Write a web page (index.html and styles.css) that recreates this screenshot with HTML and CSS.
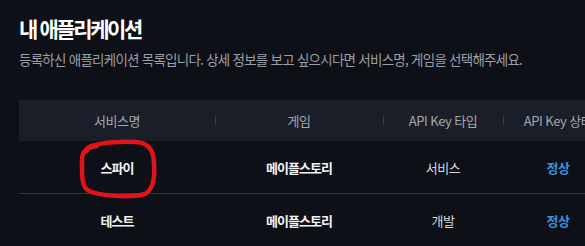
FILE: index.html
```html
<!DOCTYPE html>
<html lang="ko">
<head>
  <meta charset="UTF-8" />
  <title>내 애플리케이션</title>
  <link rel="stylesheet" href="styles.css">
</head>
<body>
  <div class="page">
    <h1 class="title">내 애플리케이션</h1>
    <p class="desc">등록하신 애플리케이션 목록입니다. 상세 정보를 보고 싶으시다면 서비스명, 게임을 선택해주세요.</p>

    <table class="apps">
      <colgroup>
        <col class="c-name">
        <col class="c-game">
        <col class="c-type">
        <col class="c-state">
        <col class="c-more">
      </colgroup>
      <thead>
        <tr>
          <th>서비스명</th>
          <th>게임</th>
          <th>API Key 타입</th>
          <th>API Key 상태</th>
          <th>등록일</th>
        </tr>
      </thead>
      <tbody>
        <tr>
          <td class="name marked">
            스파이
            <svg class="scribble" viewBox="78 138 82 64" width="82" height="64">
              <path d="M87 151 C83 145 110 141 136 142 C150 143 154 152 154 164 C155 177 154 189 145 194 C130 198 100 196 89 191 C81 187 82 174 82 160 C82 152 86 147 97 146" />
            </svg>
          </td>
          <td class="game">메이플스토리</td>
          <td>서비스</td>
          <td class="state">정상</td>
          <td></td>
        </tr>
        <tr>
          <td class="name">테스트</td>
          <td class="game">메이플스토리</td>
          <td>개발</td>
          <td class="state">정상</td>
          <td></td>
        </tr>
      </tbody>
    </table>
  </div>
</body>
</html>
```

FILE: styles.css
```css
html, body {
  margin: 0;
  padding: 0;
  background: #0d1017;
  color: #fff;
  font-family: "Noto Sans CJK KR", "Noto Sans", sans-serif;
  height: 100vh;
  overflow: hidden;
}

.page {
  padding: 12px 0 0 19px;
}

.title {
  margin: 0;
  font-size: 21px;
  font-weight: 700;
  line-height: 32px;
  letter-spacing: -2.4px;
}

.desc {
  margin: 5px 0 0;
  font-size: 13.5px;
  line-height: 20px;
  letter-spacing: -0.75px;
  color: #9a9fa8;
}

.apps {
  margin-top: 31px;
  border-collapse: collapse;
  table-layout: fixed;
  width: 700px;
  font-size: 13px;
  letter-spacing: -0.5px;
}

.c-name { width: 196px; }
.c-game { width: 168px; }
.c-type { width: 120px; }
.c-state { width: 110px; }
.c-more { width: 106px; }

.apps th {
  background: #1a1e28;
  color: #a3a7b0;
  font-weight: 400;
  height: 41px;
  padding: 0;
  position: relative;
}

.apps th + th::before {
  content: "";
  position: absolute;
  left: 0;
  top: 16px;
  width: 1px;
  height: 9px;
  background: #3a3e48;
}

.apps td {
  height: 52px;
  padding: 0;
  text-align: center;
  color: #d6d8dc;
}

.apps tbody tr + tr td {
  border-top: 1px solid #30333a;
}

.apps td.name,
.apps td.game {
  color: #f2f3f5;
  font-weight: 700;
  letter-spacing: -1px;
}

.apps td.state {
  color: #3f8fe0;
  font-weight: 700;
}

/* hand-drawn red circle round the first service */
.marked {
  position: relative;
}

.scribble {
  position: absolute;
  left: 59px;
  top: -3px;
  overflow: visible;
}

.scribble path {
  fill: none;
  stroke: #e0141a;
  stroke-width: 4.5;
  stroke-linecap: round;
  stroke-linejoin: round;
}
```
